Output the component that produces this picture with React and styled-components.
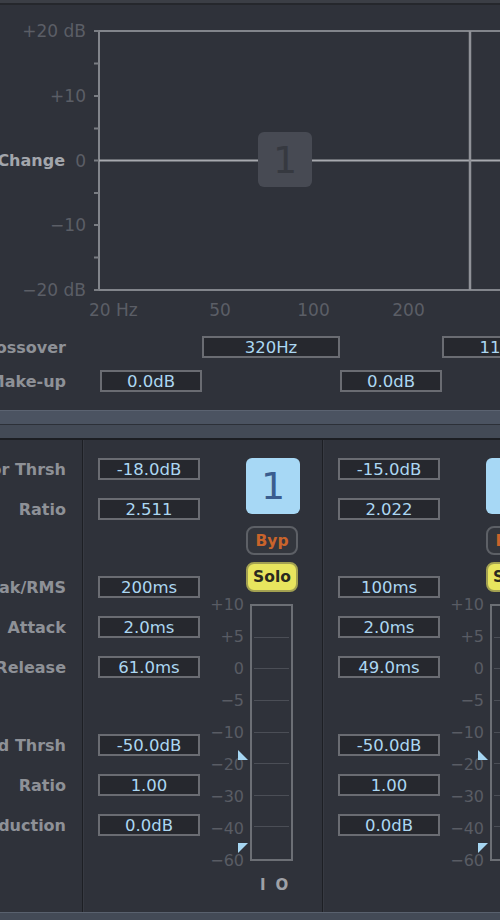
import React from 'react';
import styled, { createGlobalStyle } from 'styled-components';

const Global = createGlobalStyle`
  html, body { margin: 0; padding: 0; background: #2f323a; overflow: hidden; }
  body { width: 500px; height: 920px; font-family: "DejaVu Sans", "Noto Sans", sans-serif; }
  #root { width: 500px; height: 920px; overflow: hidden; }
`;

const Page = styled.div`
  width: 500px;
  height: 920px;
  background: #2f323a;
  display: flex;
  flex-direction: column;
  overflow: hidden;
  font-family: "DejaVu Sans", "Noto Sans", sans-serif;
`;

const TopStrip = styled.div`
  flex: none;
  height: 3px;
  background: #3b3e45;
  border-bottom: 2px solid #25272c;
`;

const Chart = styled.svg`
  display: block;
  flex: none;
  font-family: "DejaVu Sans", "Noto Sans", sans-serif;
`;

const ControlRow = styled.div`
  flex: none;
  display: flex;
  align-items: center;
  height: 22px;
  margin-top: ${(p) => p.$mt}px;
`;

const RowLabel = styled.div`
  flex: none;
  width: 82px;
  height: 22px;
  box-sizing: border-box;
  padding-right: 16px;
  display: flex;
  align-items: center;
  justify-content: flex-end;
  white-space: nowrap;
  font-size: 16px;
  font-weight: bold;
  color: #8e9197;
`;

const ValueBox = styled.div`
  flex: none;
  box-sizing: border-box;
  width: ${(p) => p.$w || 102}px;
  height: 22px;
  margin-left: ${(p) => p.$ml || 0}px;
  border: 2px solid #6a6c72;
  background: #26282e;
  color: #acd7f2;
  font-size: 16.5px;
  display: flex;
  align-items: center;
  justify-content: center;
  white-space: nowrap;
  overflow: hidden;
`;

const Separator = styled.div`
  flex: none;
  height: 30px;
  margin-top: 18px;
  background: linear-gradient(
    to bottom,
    #5b6371 0 1px,
    #4b5361 1px 14px,
    #2c3038 14px 15px,
    #434a56 15px 28px,
    #1c1e23 28px 30px
  );
`;

const LowerPanel = styled.div`
  flex: none;
  height: 472px;
  display: flex;
`;

const LabelColumn = styled.div`
  flex: none;
  width: 82px;
  display: flex;
  flex-direction: column;
  gap: 18px;
  padding-top: 18px;
`;

const Spacer = styled.div`
  flex: none;
  height: 20px;
`;

const BandColumn = styled.div`
  flex: none;
  width: 240px;
  box-sizing: border-box;
  display: flex;
  padding-left: 15px;
  border-left: 1px solid #1d1f24;
  box-shadow: inset 1px 0 0 #373a42;
`;

const ValueColumn = styled.div`
  flex: none;
  width: 102px;
  display: flex;
  flex-direction: column;
  gap: 18px;
  padding-top: 18px;
`;

const SideColumn = styled.div`
  flex: none;
  width: 110px;
  display: flex;
  flex-direction: column;
  padding-top: 18px;
`;

const BandBadge = styled.div`
  flex: none;
  width: 54px;
  height: 56px;
  margin-left: 46px;
  border-radius: 6px;
  background: #a7d8f5;
  color: #3a5d8f;
  font-size: 38px;
  display: flex;
  align-items: center;
  justify-content: center;
`;

const ToggleButton = styled.div`
  flex: none;
  box-sizing: border-box;
  width: 52px;
  height: ${(p) => p.$h}px;
  margin-left: 46px;
  margin-top: ${(p) => p.$mt}px;
  border-radius: 8px;
  border: 2px solid ${(p) => (p.$solo ? '#a3a151' : '#5d6066')};
  background: ${(p) => (p.$solo ? '#e8e55e' : '#33363d')};
  color: ${(p) => (p.$solo ? '#2a2a20' : '#c9642b')};
  font-size: 15.5px;
  font-weight: bold;
  display: flex;
  align-items: center;
  justify-content: center;
`;

const MeterRow = styled.div`
  flex: none;
  position: relative;
  display: flex;
  align-items: flex-start;
  height: 257px;
  margin-top: 12px;
`;

const ScaleColumn = styled.div`
  flex: none;
  width: 44px;
  margin-top: -16px;
  display: flex;
  flex-direction: column;
`;

const ScaleLabel = styled.div`
  flex: none;
  height: 32px;
  display: flex;
  align-items: center;
  justify-content: flex-end;
  font-size: 16px;
  color: #595c64;
  white-space: nowrap;
`;

const Meter = styled.div`
  flex: none;
  box-sizing: border-box;
  width: 43px;
  height: 257px;
  margin-left: 6px;
  border: 2px solid #6c6f75;
  display: flex;
  flex-direction: column;
`;

const Segment = styled.div`
  flex: 1;
  position: relative;
  &:not(:last-child)::after {
    content: '';
    position: absolute;
    left: 2px;
    right: 2px;
    bottom: 0;
    height: 1px;
    background: #4b4e56;
  }
`;

const Marker = styled.div`
  position: absolute;
  left: 38px;
  top: ${(p) => p.$top}px;
  width: 10px;
  height: 10px;
  background: #a6d6f2;
  clip-path: ${(p) =>
    p.$down ? 'polygon(0 0, 100% 0, 0 100%)' : 'polygon(0 0, 0 100%, 100% 100%)'};
`;

const IOLabels = styled.div`
  flex: none;
  display: flex;
  gap: 10px;
  margin-left: 60px;
  margin-top: 15px;
  line-height: 18px;
  font-size: 15px;
  font-weight: bold;
  color: #9ea1a7;
`;

const BottomBand = styled.div`
  flex: none;
  height: 8px;
  background: linear-gradient(to bottom, #59616e 0 1px, #434a56 1px 8px);
`;

const rowLabels = ['Compr Thrsh', 'Ratio', null, 'Peak/RMS', 'Attack', 'Release', null, 'Expnd Thrsh', 'Ratio', 'Reduction'];

const bands = [
  { id: 1, values: ['-18.0dB', '2.511', null, '200ms', '2.0ms', '61.0ms', null, '-50.0dB', '1.00', '0.0dB'] },
  { id: 2, values: ['-15.0dB', '2.022', null, '100ms', '2.0ms', '49.0ms', null, '-50.0dB', '1.00', '0.0dB'] },
];

const meterScale = ['+10', '+5', '0', '\u22125', '\u221210', '\u221220', '\u221230', '\u221240', '\u221260'];

const yTicks = [31, 63.5, 96, 128.5, 160.5, 193, 225, 257.5, 290];
const yLabels = [
  { y: 31, t: '+20 dB' },
  { y: 96, t: '+10' },
  { y: 160.5, t: '0' },
  { y: 225, t: '\u221210' },
  { y: 290, t: '\u221220 dB' },
];
const xLabels = [
  { x: 89, t: '20 Hz', a: 'start' },
  { x: 220, t: '50', a: 'middle' },
  { x: 313.5, t: '100', a: 'middle' },
  { x: 408.5, t: '200', a: 'middle' },
];

function Graph() {
  return (
    <Chart width="500" height="320" viewBox="0 5 500 320">
      <rect x="99" y="31" width="440" height="259" fill="none" stroke="#82858b" strokeWidth="2" />
      {yTicks.map((y) => (
        <line key={y} x1="94" x2="99" y1={y} y2={y} stroke="#7a7d83" strokeWidth="2" />
      ))}
      <line x1="99" x2="500" y1="160.5" y2="160.5" stroke="#a7a9ae" strokeWidth="2" />
      <line x1="470" x2="470" y1="31" y2="290" stroke="#909298" strokeWidth="2.5" />
      {yLabels.map((l) => (
        <text key={l.t} x="86" y={l.y} textAnchor="end" dominantBaseline="central" fontSize="17" fill="#5b5e66">
          {l.t}
        </text>
      ))}
      <text x="65" y="160.5" textAnchor="end" dominantBaseline="central" fontSize="16" fontWeight="bold" fill="#a3a6ac">
        Gain Change
      </text>
      {xLabels.map((l) => (
        <text key={l.t} x={l.x} y="310" textAnchor={l.a} dominantBaseline="central" fontSize="17" fill="#5b5e66">
          {l.t}
        </text>
      ))}
      <rect x="258" y="132" width="54" height="55" rx="6" fill="#474a53" />
      <text x="285" y="160" textAnchor="middle" dominantBaseline="central" fontSize="38" fill="#363940">
        1
      </text>
    </Chart>
  );
}

function Band({ band }) {
  return (
    <BandColumn>
      <ValueColumn>
        {band.values.map((v, i) => (v === null ? <Spacer key={i} /> : <ValueBox key={i}>{v}</ValueBox>))}
      </ValueColumn>
      <SideColumn>
        <BandBadge>{band.id}</BandBadge>
        <ToggleButton $h={29} $mt={12}>Byp</ToggleButton>
        <ToggleButton $h={30} $mt={7} $solo>Solo</ToggleButton>
        <MeterRow>
          <ScaleColumn>
            {meterScale.map((s) => (
              <ScaleLabel key={s}>{s}</ScaleLabel>
            ))}
          </ScaleColumn>
          <Meter>
            {Array.from({ length: 8 }).map((_, i) => (
              <Segment key={i} />
            ))}
          </Meter>
          <Marker $top={146} />
          <Marker $top={239} $down />
        </MeterRow>
        <IOLabels>
          <span>I</span>
          <span>O</span>
        </IOLabels>
      </SideColumn>
    </BandColumn>
  );
}

export default function App() {
  return (
    <Page>
      <Global />
      <TopStrip />
      <Graph />
      <ControlRow $mt={11}>
        <RowLabel>Crossover</RowLabel>
        <ValueBox $w={138} $ml={120}>320Hz</ValueBox>
        <ValueBox $w={138} $ml={102}>1100Hz</ValueBox>
      </ControlRow>
      <ControlRow $mt={12}>
        <RowLabel>Make-up</RowLabel>
        <ValueBox $ml={18}>0.0dB</ValueBox>
        <ValueBox $ml={138}>0.0dB</ValueBox>
      </ControlRow>
      <Separator />
      <LowerPanel>
        <LabelColumn>
          {rowLabels.map((l, i) => (l === null ? <Spacer key={i} /> : <RowLabel key={i}>{l}</RowLabel>))}
        </LabelColumn>
        {bands.map((b) => (
          <Band key={b.id} band={b} />
        ))}
      </LowerPanel>
      <BottomBand />
    </Page>
  );
}
